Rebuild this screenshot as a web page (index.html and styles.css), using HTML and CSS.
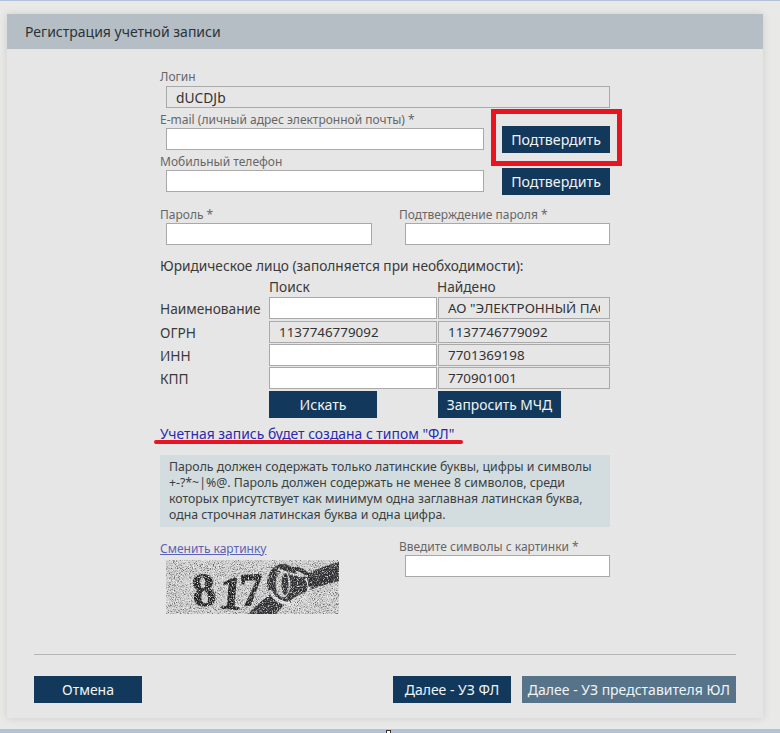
FILE: index.html
```html
<!DOCTYPE html>
<html lang="ru">
<head>
<meta charset="utf-8">
<title>Регистрация учетной записи</title>
<link rel="stylesheet" href="styles.css">
</head>
<body>
<div class="backdrop">
  <main class="dialog">
    <header class="dialog-head">Регистрация учетной записи</header>
    <div class="form">
      <label class="lbl lbl-login">Логин</label>
      <input class="field field-full ro" value="dUCDJb" readonly>
      <label class="lbl lbl-email">E-mail (личный адрес электронной почты) *</label>
      <div class="confirm-row row-email">
        <input class="field field-wide">
        <button class="btn btn-confirm">Подтвердить</button>
      </div>
      <label class="lbl lbl-phone">Мобильный телефон</label>
      <div class="confirm-row row-phone">
        <input class="field field-wide">
        <button class="btn btn-confirm">Подтвердить</button>
      </div>
      <div class="two-col pass-labels">
        <label class="lbl">Пароль *</label>
        <label class="lbl">Подтверждение пароля *</label>
      </div>
      <div class="two-col pass-inputs">
        <input class="field">
        <input class="field">
      </div>
      <div class="org-title">Юридическое лицо (заполняется при необходимости):</div>
      <div class="org-grid">
        <span></span><span class="org-head">Поиск</span><span class="org-head">Найдено</span>
        <span class="org-name">Наименование</span><input class="field"><input class="field ro" value="АО &quot;ЭЛЕКТРОННЫЙ ПАСПОРТ&quot;" readonly>
        <span class="org-name">ОГРН</span><input class="field ro" value="1137746779092" readonly><input class="field ro" value="1137746779092" readonly>
        <span class="org-name">ИНН</span><input class="field"><input class="field ro" value="7701369198" readonly>
        <span class="org-name">КПП</span><input class="field"><input class="field ro" value="770901001" readonly>
        <span></span><button class="btn btn-search">Искать</button><button class="btn btn-mcd">Запросить МЧД</button>
      </div>
      <a class="type-link" href="#">Учетная запись будет создана с типом "ФЛ"</a>
      <div class="hint">Пароль должен содержать только латинские буквы, цифры и символы +-?*~|%@. Пароль должен содержать не менее 8 символов, среди которых присутствует как минимум одна заглавная латинская буква, одна строчная латинская буква и одна цифра.</div>
      <div class="captcha-row">
        <div class="captcha-left">
          <a class="change" href="#">Сменить картинку</a>
          <svg class="captcha" width="173" height="54" viewBox="0 0 173 54" role="img" aria-label="Капча">
            <defs>
              <filter id="noise" x="0" y="0" width="100%" height="100%">
                <feTurbulence type="fractalNoise" baseFrequency="0.95" numOctaves="2" seed="7"/>
                <feColorMatrix type="matrix" values="0 0 0 0 0.12  0 0 0 0 0.12  0 0 0 0 0.12  3.2 0 0 0 -1.5"/>
              </filter>
              <filter id="noise-light" x="0" y="0" width="100%" height="100%">
                <feTurbulence type="fractalNoise" baseFrequency="0.8" numOctaves="2" seed="19"/>
                <feColorMatrix type="matrix" values="0 0 0 0 0.95  0 0 0 0 0.95  0 0 0 0 0.95  3 0 0 0 -1.5"/>
              </filter>
              <filter id="rough" x="-5%" y="-5%" width="110%" height="110%">
                <feTurbulence type="fractalNoise" baseFrequency="0.7" numOctaves="1" seed="3"/>
                <feDisplacementMap in="SourceGraphic" scale="1.6"/>
              </filter>
            </defs>
            <rect width="173" height="54" fill="#d4d4d4"/>
            <g filter="url(#rough)">
              <path d="M82 54C100 34 135 12 173 2V21C160 24 148 28 137 33C126 38 117 45 110 54Z" fill="#2b2b2d"/>
              <text class="captcha-digits" transform="translate(28 47) rotate(-7)">8</text>
              <text class="captcha-digits" transform="translate(52 48) rotate(5)">1</text>
              <text class="captcha-digits" transform="translate(74 46) rotate(-2)">7</text>
              <ellipse cx="117" cy="23" rx="16" ry="19" fill="#2b2b2d"/>
              <g fill="none">
                <ellipse cx="117" cy="24" rx="7" ry="13" fill="#cfcfcf" stroke="#cfcfcf" stroke-width="1"/>
                <ellipse cx="119" cy="24" rx="3.5" ry="11" fill="#2b2b2d"/>
                <path d="M104 30C108 42 122 47 134 41C143 36 146 26 140 18" stroke="#e2e2e2" stroke-width="3.5"/>
                <path d="M122 10C134 6 146 14 144 27" stroke="#262628" stroke-width="4"/>
                <path d="M112 9C122 14 132 16 142 16" stroke="#dcdcdc" stroke-width="2"/>
              </g>
            </g>
            <rect width="173" height="54" filter="url(#noise)"/>
            <rect width="173" height="54" filter="url(#noise-light)"/>
          </svg>
        </div>
        <div class="captcha-right">
          <label class="lbl">Введите символы с картинки *</label>
          <input class="field">
        </div>
      </div>
    </div>
    <footer class="actions">
      <button class="btn btn-foot btn-cancel"><span>Отмена</span></button>
      <div class="actions-right">
        <button class="btn btn-foot btn-next"><span>Далее - УЗ ФЛ</span></button>
        <button class="btn btn-foot btn-rep"><span>Далее - УЗ представителя ЮЛ</span></button>
      </div>
    </footer>
    <div class="mark-box"></div>
    <div class="mark-line"></div>
  </main>
</div>
<div class="handle"></div>
</body>
</html>
```
FILE: styles.css
```css
* { box-sizing: border-box; }
html, body { margin: 0; height: 733px; overflow: hidden; }
body { position: relative; background: #b2c2d9; font-family: "Noto Sans", "Open Sans", sans-serif; color: #333; }
.backdrop { margin-top: 1px; height: 728px; padding: 13px 0 0 7px; background: #e9e9e7; }
.dialog { position: relative; width: 756px; height: 704px; background: #e6e6e6; box-shadow: 0 0 8px rgba(0,0,0,.12); }
.dialog-head { height: 35px; padding-left: 18px; background: #b4bec4; font-size: 14px; line-height: 36px; color: #2c3338; }
.form { width: 450px; margin-left: 153px; padding-top: 20px; }
.lbl { display: block; font-size: 12px; line-height: 16px; color: #666; white-space: nowrap; }
.field { display: block; width: 100%; height: 22px; margin: 0; padding: 0 9px; border: 1px solid #a9a9a9; background: #fff; font: 13.4px "Noto Sans", sans-serif; color: #333; border-radius: 0; outline: 0; }
.field.ro { background: #e6e6e6; }
.lbl-login { height: 17px; }
.field-full { width: 444px; margin-left: 6px; font-size: 13.8px; }
.lbl-email, .lbl-phone { height: 18px; margin-top: 2px; padding-top: 2px; }
.confirm-row { display: flex; align-items: center; justify-content: space-between; width: 444px; margin-left: 6px; height: 22px; }
.field-wide { width: 318px; }
.btn { border: 0; padding: 0; background: #12395b; color: #f0f4f6; font: 400 14.2px "Noto Sans", sans-serif; white-space: nowrap; }
.btn-confirm { flex: none; width: 108px; height: 27px; }
.two-col { display: grid; grid-template-columns: 206px 205px; justify-content: space-between; }
.pass-labels { grid-template-columns: 239px 211px; height: 15px; margin-top: 15px; }
.pass-inputs { width: 444px; margin: 1px 0 0 6px; height: 22px; }
.org-title { margin-top: 12px; font-size: 13.7px; line-height: 17px; color: #3a3a3a; white-space: nowrap; }
.org-grid { display: grid; grid-template-columns: 109px 168px 173px; grid-template-rows: 16px 23px 22px 22px 22px 27px; row-gap: 1px; margin-top: 6px; }
.org-grid > .field:nth-of-type(2n) { margin-left: 1px; width: 172px; }
.org-head { font-size: 13.7px; line-height: 14px; color: #3a3a3a; }
.org-name { font-size: 13.7px; line-height: 24px; color: #3a3a3a; white-space: nowrap; }
.btn-search { width: 108px; height: 27px; margin-top: 1px; }
.btn-mcd { width: 123px; height: 27px; margin-left: 1px; margin-top: 1px; font-size: 13.8px; }
.type-link { display: block; margin-top: 9px; height: 16px; font-size: 13.9px; line-height: 15px; color: #2a2ab0; text-decoration: none; white-space: nowrap; }
.hint { height: 72px; margin-top: 13px; padding: 4px 9px; background: #d3dcdf; font-size: 12.3px; line-height: 16px; color: #3a3f42; }
.captcha-row { display: grid; grid-template-columns: 239px 211px; margin-top: 13px; }
.change { display: block; font-size: 12px; line-height: 17px; color: #5a62b8; }
.captcha { display: block; margin: 3px 0 0 6px; overflow: visible; }
.captcha-digits { font: 700 47px "Liberation Serif", serif; fill: #1c1c1c; stroke: #1c1c1c; stroke-width: 1; }
.captcha-right .lbl { height: 16px; margin-top: -1px; }
.captcha-right .field { width: 205px; margin: 0 0 0 6px; }
.actions { position: absolute; left: 27px; right: 27px; top: 640px; display: flex; justify-content: space-between; padding-top: 21px; border-top: 1px solid #b5b5b5; }
.actions-right { display: flex; gap: 11px; }
.btn-foot { height: 27px; font-size: 14px; }
.btn-cancel { width: 108px; }
.btn-next { width: 118px; }
.btn-rep { width: 214px; background: #56738a; }
.mark-box { position: absolute; left: 484px; top: 95px; width: 131px; height: 57px; border: 5px solid #e8141f; }
.mark-line { position: absolute; left: 147px; top: 426px; width: 309px; height: 4px; border-radius: 2px; background: #e8141f; }
.handle { position: absolute; left: 386px; top: 730px; width: 5px; height: 5px; background: #fff; border: 1px solid #333; }
```
